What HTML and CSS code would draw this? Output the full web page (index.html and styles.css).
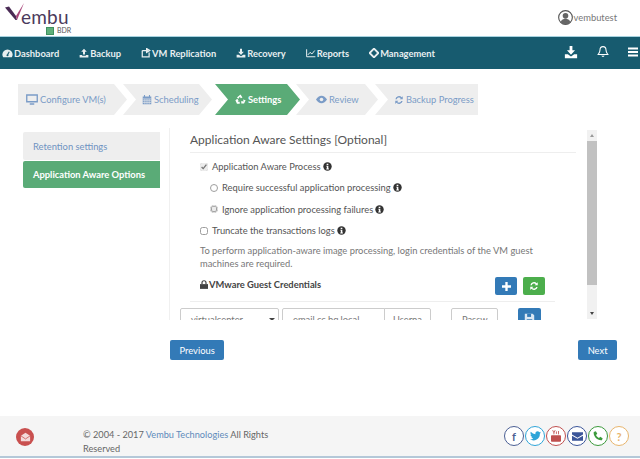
FILE: index.html
```html
<!DOCTYPE html>
<html lang="en">
<head>
<meta charset="utf-8">
<title>Vembu BDR</title>
<link rel="stylesheet" href="styles.css">
</head>
<body>
<svg class="defs" width="0" height="0" aria-hidden="true">
  <symbol id="i-info" viewBox="0 0 16 16"><circle cx="8" cy="8" r="7.5" fill="currentColor"/><path d="M6.5 3h3v2.2h-3zM5.8 6.6h3.7v5h1v1.6H5.8v-1.6h1v-3.4h-1z" fill="#fff"/></symbol>
  <symbol id="i-upload" viewBox="0 0 16 16"><path d="M8 1l4.5 4.8H9.6v4.4H6.4V5.8H3.5zM1 11.2h4v1h6v-1h4V15H1z" fill="currentColor"/></symbol>
  <symbol id="i-download" viewBox="0 0 16 16"><path d="M6.4 1h3.2v5h3L8 11 3.4 6h3zM1 10.6h3.4L8 13l3.6-2.4H15V15H1z" fill="currentColor"/></symbol>
  <symbol id="i-refresh" viewBox="0 0 16 16"><path d="M2.2 6.6A6 6 0 0 1 12.3 3.5L14 1.8v5h-5l1.8-1.8A3.8 3.8 0 0 0 4.5 6.6zM13.8 9.4A6 6 0 0 1 3.7 12.5L2 14.2v-5h5l-1.8 1.8a3.8 3.8 0 0 0 6.3-1.6z" fill="currentColor"/></symbol>
</svg>

<header class="topbar">
  <div class="logo">
    <svg class="logo-mark" width="22" height="20" viewBox="0 0 22 20"><path d="M1 4.500L5 3.500 12 13 13 17H11.500z" fill="#4a2b55"/><path d="M12 13L20 0 13 17z" fill="#a8457a"/></svg>
    <span class="logo-word">embu</span>
    <span class="logo-sub"><i class="logo-box"></i>BDR</span>
  </div>
  <div class="user">
    <svg width="15" height="15" viewBox="0 0 16 16"><circle cx="8" cy="8" r="7.3" fill="#fff" stroke="#555" stroke-width="1.2"/><circle cx="8" cy="6.2" r="3" fill="#666"/><path d="M2.8 13c.8-3 3-3.8 5.2-3.800s4.400.8 5.200 3.800A7 7 0 0 1 2.800 13z" fill="#666"/></svg>
    <span>vembutest</span>
  </div>
</header>

<nav class="nav">
  <ul class="nav-main">
    <li><svg width="11" height="11" viewBox="0 0 16 16"><path d="M8 2a7.500 7.500 0 0 0-7.500 7.500c0 1.700.5 3 1.300 4h12.400c.8-1 1.300-2.300 1.300-4A7.500 7.500 0 0 0 8 2z" fill="currentColor"/><path d="M8 10l2.500-4.500" stroke="#175b6f" stroke-width="1.500"/><circle cx="8" cy="10.500" r="1.500" fill="#175b6f"/></svg>Dashboard</li>
    <li><svg width="10" height="10"><use href="#i-upload"/></svg>Backup</li>
    <li><svg width="10" height="10" viewBox="0 0 16 16"><path d="M2 4h9M2 4v10h11V7M9 1l5 3-5 3z" fill="none" stroke="currentColor" stroke-width="2"/></svg>VM Replication</li>
    <li><svg width="10" height="10"><use href="#i-download"/></svg>Recovery</li>
    <li><svg width="10" height="10" viewBox="0 0 16 16"><path d="M1 2v12h14M3 11l3.500-4 3 2.500L14 4" fill="none" stroke="currentColor" stroke-width="1.600"/></svg>Reports</li>
    <li><svg width="10" height="10" viewBox="0 0 16 16"><path d="M8 1l7 7-7 7-7-7z" fill="none" stroke="currentColor" stroke-width="3"/></svg>Management</li>
  </ul>
  <div class="nav-tools">
    <svg width="14" height="14"><use href="#i-download"/></svg>
    <svg width="12" height="13" viewBox="0 0 16 16"><path d="M8 1.500c-3 0-4 2.300-4 4.500 0 3-1.500 4.500-2.500 6h13c-1-1.500-2.500-3-2.500-6 0-2.200-1-4.500-4-4.500zM6.500 13.500a1.600 1.600 0 0 0 3 0" fill="none" stroke="currentColor" stroke-width="1.400"/></svg>
    <svg width="10" height="10" viewBox="0 0 10 10"><path d="M0 .5h10v2H0zM0 4h10v2H0zM0 7.500h10v2H0z" fill="currentColor"/></svg>
  </div>
</nav>

<ol class="steps">
  <li class="step step-first step-1"><svg width="12" height="11" viewBox="0 0 16 14"><path d="M1 1h14v9H1zM5 13h6" fill="none" stroke="currentColor" stroke-width="1.800"/></svg>Configure VM(s)</li>
  <li class="step step-2"><svg width="10" height="10" viewBox="0 0 14 14"><path d="M1 2h12v11H1z" fill="currentColor"/><path d="M1 5.500h12M4 5.500V13M7 5.500V13M10 5.500V13M1 8h12M1 10.500h12" stroke="#eee" stroke-width=".8"/><path d="M3.500 0v3M10.500 0v3" stroke="currentColor" stroke-width="1.500"/></svg>Scheduling</li>
  <li class="step step-3 step-active"><svg width="11" height="11" viewBox="0 0 14 14"><path d="M7 .5l2.500 4-2 1-1.500-2-1.500 2.500L2.500 4.500zM13.500 8l-2 4H8v-3l3 .5-.8-2.500zM.5 8l2.500-2 1.500 2.500-1 1.500H6v2.500H2.500z" fill="currentColor"/></svg>Settings</li>
  <li class="step step-4"><svg width="11" height="9" viewBox="0 0 16 12"><path d="M0 6c2-3.500 5-5.500 8-5.500S14 2.500 16 6c-2 3.500-5 5.500-8 5.500S2 9.500 0 6z" fill="currentColor"/><circle cx="8" cy="6" r="2.600" fill="#eee"/></svg>Review</li>
  <li class="step step-5"><svg width="10" height="10"><use href="#i-refresh"/></svg>Backup Progress</li>
</ol>

<main class="main">
  <aside class="tabs">
    <div class="tab">Retention settings</div>
    <div class="tab tab-active">Application Aware Options</div>
  </aside>

  <section class="panel">
    <div class="pane">
      <div class="pane-scroll">
        <h2 class="pane-title">Application Aware Settings [Optional]</h2>
        <div class="opts">
          <label class="opt"><input type="checkbox" class="tick" checked>Application Aware Process<svg class="info" width="9" height="9"><use href="#i-info"/></svg></label>
          <label class="opt opt-sub"><input type="radio" name="failure" class="dot">Require successful application processing<svg class="info" width="9" height="9"><use href="#i-info"/></svg></label>
          <label class="opt opt-sub"><input type="radio" name="failure" class="dot" checked>Ignore application processing failures<svg class="info" width="9" height="9"><use href="#i-info"/></svg></label>
          <label class="opt"><input type="checkbox" class="tick">Truncate the transactions logs<svg class="info" width="9" height="9"><use href="#i-info"/></svg></label>
        </div>
        <p class="note">To perform application-aware image processing, login credentials of the VM guest machines are required.</p>
        <div class="cred-head">
          <strong class="cred-title"><svg width="8" height="9" viewBox="0 0 10 11"><path d="M2.500 5V3.300a2.500 2.500 0 0 1 5 0V5" fill="none" stroke="currentColor" stroke-width="1.500"/><path d="M0 5h10v6H0z" fill="currentColor"/></svg>VMware Guest Credentials</strong>
          <div class="cred-actions">
            <button class="btn-icon btn-blue" type="button"><svg width="9" height="9" viewBox="0 0 10 10"><path d="M3.700 0h2.600v3.700H10v2.600H6.300V10H3.700V6.300H0V3.700h3.700z" fill="currentColor"/></svg></button>
            <button class="btn-icon btn-green" type="button"><svg width="10" height="10"><use href="#i-refresh"/></svg></button>
          </div>
        </div>
        <div class="cred-row">
          <div class="field field-select">virtualcenter<i class="caret"></i></div>
          <div class="field-group">
            <div class="field field-email">email.cc.hq.local</div>
            <div class="field field-user">Userna</div>
          </div>
          <div class="field field-pass">Passw</div>
          <button class="btn-icon btn-blue btn-save" type="button"><svg width="11" height="11" viewBox="0 0 14 14"><path d="M1 1h10l2 2v10H1z" fill="#dbe7f3"/><path d="M4 1h5v4H4z" fill="#337ab7"/><path d="M3.500 8h7v5h-7z" fill="#337ab7"/></svg></button>
        </div>
      </div>
      <div class="scrollbar">
        <span class="sb-arrow sb-up"></span>
        <span class="sb-thumb"></span>
        <span class="sb-arrow sb-down"></span>
      </div>
    </div>
    <div class="pager">
      <button class="btn" type="button">Previous</button>
      <button class="btn" type="button">Next</button>
    </div>
  </section>
</main>

<footer class="footer">
  <span class="foot-badge"><svg width="11" height="10" viewBox="0 0 14 13"><path d="M1 5l6-4 6 4v7H1z" fill="#f3d9d9"/><path d="M1 5l6 4 6-4" fill="none" stroke="#c9504f" stroke-width="1"/></svg></span>
  <p class="copy"><span class="copy-line">© 2004 - 2017 <a class="copy-link">Vembu Technologies</a> All Rights</span><span class="copy-line">Reserved</span></p>
  <div class="social">
    <span class="soc soc-fb">f</span>
    <span class="soc soc-tw"><svg width="11" height="10" viewBox="0 0 16 14"><path d="M16 2a6 6 0 0 1-1.800.5A3.300 3.300 0 0 0 15.600.7a6 6 0 0 1-2 .8A3.200 3.200 0 0 0 8 4.400 9 9 0 0 1 1.200.9a3.300 3.300 0 0 0 1 4.400 3 3 0 0 1-1.500-.4c0 1.600 1.100 3 2.600 3.300a3 3 0 0 1-1.500 0c.4 1.300 1.600 2.200 3 2.300A6.500 6.500 0 0 1 0 11.800 9.200 9.200 0 0 0 14.300 3.600 6 6 0 0 0 16 2z" fill="currentColor"/></svg></span>
    <span class="soc soc-yt"><svg width="10" height="12" viewBox="0 0 12 14"><path d="M1 6h10a1 1 0 0 1 1 1v6a1 1 0 0 1-1 1H1a1 1 0 0 1-1-1V7a1 1 0 0 1 1-1z" fill="currentColor"/><path d="M2 0l1.500 3v2M5 0L3.500 3M6.500 1.500v3M9 1v4" stroke="currentColor" fill="none"/></svg></span>
    <span class="soc soc-mail"><svg width="11" height="9" viewBox="0 0 14 11"><path d="M0 0h14v3L7 7 0 3zM0 4.500l7 4 7-4V11H0z" fill="currentColor"/></svg></span>
    <span class="soc soc-ph"><svg width="10" height="10" viewBox="0 0 14 14"><path d="M1 1.500L4 .5l2 3.500-1.800 1.500c.8 1.800 2.500 3.500 4.300 4.300L10 8l3.500 2-1 3c-6 1-12.500-5.500-11.500-11.500z" fill="currentColor"/></svg></span>
    <span class="soc soc-help">?</span>
  </div>
</footer>
</body>
</html>
```

FILE: styles.css
```css
* { box-sizing: border-box; }
html, body { margin: 0; padding: 0; }
body {
  width: 640px;
  height: 459px;
  overflow: hidden;
  display: flex;
  flex-direction: column;
  font-family: Lato, "Open Sans", sans-serif;
  font-size: 9.35px;
  color: #555;
  background: #fff;
}
.defs { position: absolute; }
svg { display: block; flex: none; }

/* top bar */
.topbar {
  height: 36px;
  flex: none;
  display: flex;
  justify-content: space-between;
  align-items: flex-start;
  padding: 0 23px 0 3px;
}
.logo { position: relative; width: 80px; height: 36px; }
.logo-mark { position: absolute; left: 1px; top: 3px; }
.logo-word {
  position: absolute;
  left: 18px;
  top: 8px;
  font-size: 19px;
  line-height: 18px;
  letter-spacing: .2px;
  color: #4b3a5c;
}
.logo-sub {
  position: absolute;
  left: 43px;
  top: 26px;
  display: flex;
  align-items: center;
  gap: 3px;
  font-size: 7px;
  line-height: 9px;
  color: #555;
}
.logo-box { width: 8px; height: 8px; background: #5fb07a; border: 1px solid #3f9160; }
.user {
  display: flex;
  align-items: center;
  gap: 1px;
  margin-top: 10px;
  font-size: 9.35px;
  color: #777;
}

/* nav */
.nav {
  height: 33px;
  flex: none;
  display: flex;
  justify-content: space-between;
  align-items: center;
  background: #175b6f;
  border-top: 1px solid #a7d3e0;
  color: #fff;
  padding: 0 2px;
}
.nav-main { display: flex; gap: 20px; list-style: none; margin: 0; padding: 0; }
.nav-main li { display: flex; align-items: center; gap: 1px; font-weight: 700; opacity: .9; }
.nav-tools { display: flex; align-items: center; gap: 19px; margin-top: -3px; }

/* stepper */
.steps {
  display: flex;
  flex: none;
  list-style: none;
  height: 31px;
  margin: 15px 0 0 18px;
  padding: 0;
}
.step {
  display: flex;
  align-items: center;
  gap: 2px;
  height: 31px;
  white-space: nowrap;
  background: #eee;
  color: #7b9cc7;
  clip-path: polygon(0 0, calc(100% - 13px) 0, 100% 50%, calc(100% - 13px) 100%, 0 100%, 13px 50%);
}
.step-first { clip-path: polygon(0 0, calc(100% - 13px) 0, 100% 50%, calc(100% - 13px) 100%, 0 100%); padding-left: 8px; }
.step-1 { width: 109px; margin-right: -4px; }
.step-2 { width: 89px; padding-left: 19px; margin-right: 3px; }
.step-3 { width: 85px; padding-left: 20px; margin-right: -4px; }
.step-4 { width: 82px; padding-left: 20px; margin-right: -3px; }
.step-5 {
  width: 103px;
  padding-left: 19px;
  clip-path: polygon(0 0, 100% 0, 100% 100%, 0 100%, 13px 50%);
}
.step-active { background: #5aab77; color: #fff; font-weight: 700; }

/* main */
.main { flex: 1; display: flex; padding: 13px 23px 0; min-height: 0; }
.tabs { width: 137px; flex: none; padding-top: 4px; margin-right: 9px; }
.tab {
  height: 28px;
  display: flex;
  align-items: center;
  padding-left: 10px;
  background: #eee;
  color: #6e93c2;
  border-radius: 2px 0 0 2px;
  margin-bottom: 1px;
}
.tab-active { height: 27px; background: #5aab77; color: #fff; font-weight: 700; }
.panel { width: 448px; flex: none; }
.pane { display: flex; height: 192px; border-left: 1px solid #f0f0f0; }
.pane-scroll { width: 417px; flex: none; overflow: hidden; padding: 0 0 0 10px; }
.pane-title {
  margin: 0 0 0 10px;
  height: 25px;
  width: 386px;
  padding-top: 5px;
  font-size: 12px;
  line-height: 14px;
  font-weight: 400;
  color: #555;
  border-bottom: 1px solid #eee;
}
.opts { margin: 3px 0 0 20px; }
.opt {
  display: flex;
  align-items: center;
  height: 21.3px;
  color: #555;
}
.opt-sub { padding-left: 10px; }
.tick, .dot { width: 8px; height: 8px; margin: 0 4px 0 0; flex: none; accent-color: #e4e4e4; opacity: .7; }
.info { margin-left: 2px; color: #333; }
.note {
  margin: 3px 0 0 20px;
  width: 345px;
  line-height: 13px;
  color: #777;
}
.cred-head {
  display: flex;
  justify-content: space-between;
  align-items: flex-start;
  margin: 6px 0 0 10px;
  width: 365px;
  height: 26px;
  padding: 0 10px;
  border-bottom: 1px solid #eee;
}
.cred-title { display: flex; align-items: center; gap: 1px; height: 14px; margin-top: 1px; font-weight: 700; color: #444; }
.cred-actions { display: flex; gap: 6px; margin-top: 1px; }
.btn-icon {
  display: flex;
  align-items: center;
  justify-content: center;
  width: 22px;
  height: 18px;
  padding: 0;
  border: 0;
  border-radius: 2px;
  color: #fff;
}
.btn-blue { background: #337ab7; }
.btn-green { background: #4cae4c; }
.cred-row { display: flex; align-items: flex-start; margin-top: 6px; }
.field {
  height: 26px;
  padding: 5px 0 0 10px;
  border: 1px solid #ccc;
  border-radius: 2px;
  line-height: 12px;
  color: #777;
  background: #fff;
}
.field-select { position: relative; width: 99px; margin-right: 3px; }
.caret {
  position: absolute;
  right: 3px;
  top: 9px;
  border: 3px solid transparent;
  border-top: 3px solid #444;
  border-bottom: 0;
}
.field-group { display: flex; }
.field-email { width: 103px; border-radius: 2px 0 0 2px; }
.field-user { width: 47px; border-left: 1px solid #ccc; border-radius: 0 2px 2px 0; padding-left: 8px; margin-left: -1px; }
.field-pass { width: 47px; margin-left: 20px; }
.btn-save { width: 23px; height: 20px; margin-left: 20px; }
.scrollbar {
  width: 10px;
  margin: 2px 0 1px;
  display: flex;
  flex-direction: column;
  background: #f1f1f1;
}
.sb-thumb { display: block; height: 144px; background: #c1c1c1; }
.sb-arrow { display: block; height: 11px; position: relative; flex: none; }
.sb-down { margin-top: auto; }
.sb-up::after, .sb-down::after {
  content: "";
  position: absolute;
  left: 3px;
  top: 4px;
  border: 2px solid transparent;
}
.sb-up::after { border-bottom: 3px solid #999; border-top: 0; }
.sb-down::after { border-top: 3px solid #444; border-bottom: 0; }
.pager { display: flex; justify-content: space-between; margin-top: 20px; padding-left: 1px; }
.btn {
  height: 20px;
  padding: 0 9.5px;
  border: 0;
  border-radius: 2px;
  background: #337ab7;
  color: #fff;
  font: 400 9.35px Lato, sans-serif;
}

/* footer */
.footer {
  height: 42px;
  flex: none;
  margin-bottom: 1px;
  display: flex;
  align-items: center;
  background: #f5f5f5;
  border-bottom: 2px solid #b4c8d8;
  padding: 0 11px 0 16px;
}
.foot-badge {
  display: flex;
  align-items: center;
  justify-content: center;
  width: 18px;
  height: 18px;
  border-radius: 50%;
  background: #c9504f;
  margin-right: 49px;
  margin-top: 2px;
}
.copy {
  width: 192px;
  margin: 12px 0 0;
  font-size: 9.2px;
  line-height: 14px;
  color: #666;
}
.copy-line { display: block; white-space: nowrap; }
.copy-link { color: #5f8bbb; }
.social { display: flex; gap: 1px; margin-left: auto; }
.soc {
  display: flex;
  align-items: center;
  justify-content: center;
  width: 20px;
  height: 20px;
  border: 1.3px solid currentColor;
  border-radius: 50%;
  background: #fff;
  font-size: 11px;
  font-weight: 700;
}
.soc-fb { color: #4b5f94; }
.soc-tw { color: #2fa5d8; }
.soc-yt { color: #c0504f; }
.soc-mail { color: #3b5599; }
.soc-ph { color: #3c9a3c; }
.soc-help { color: #e8b56d; }
```
